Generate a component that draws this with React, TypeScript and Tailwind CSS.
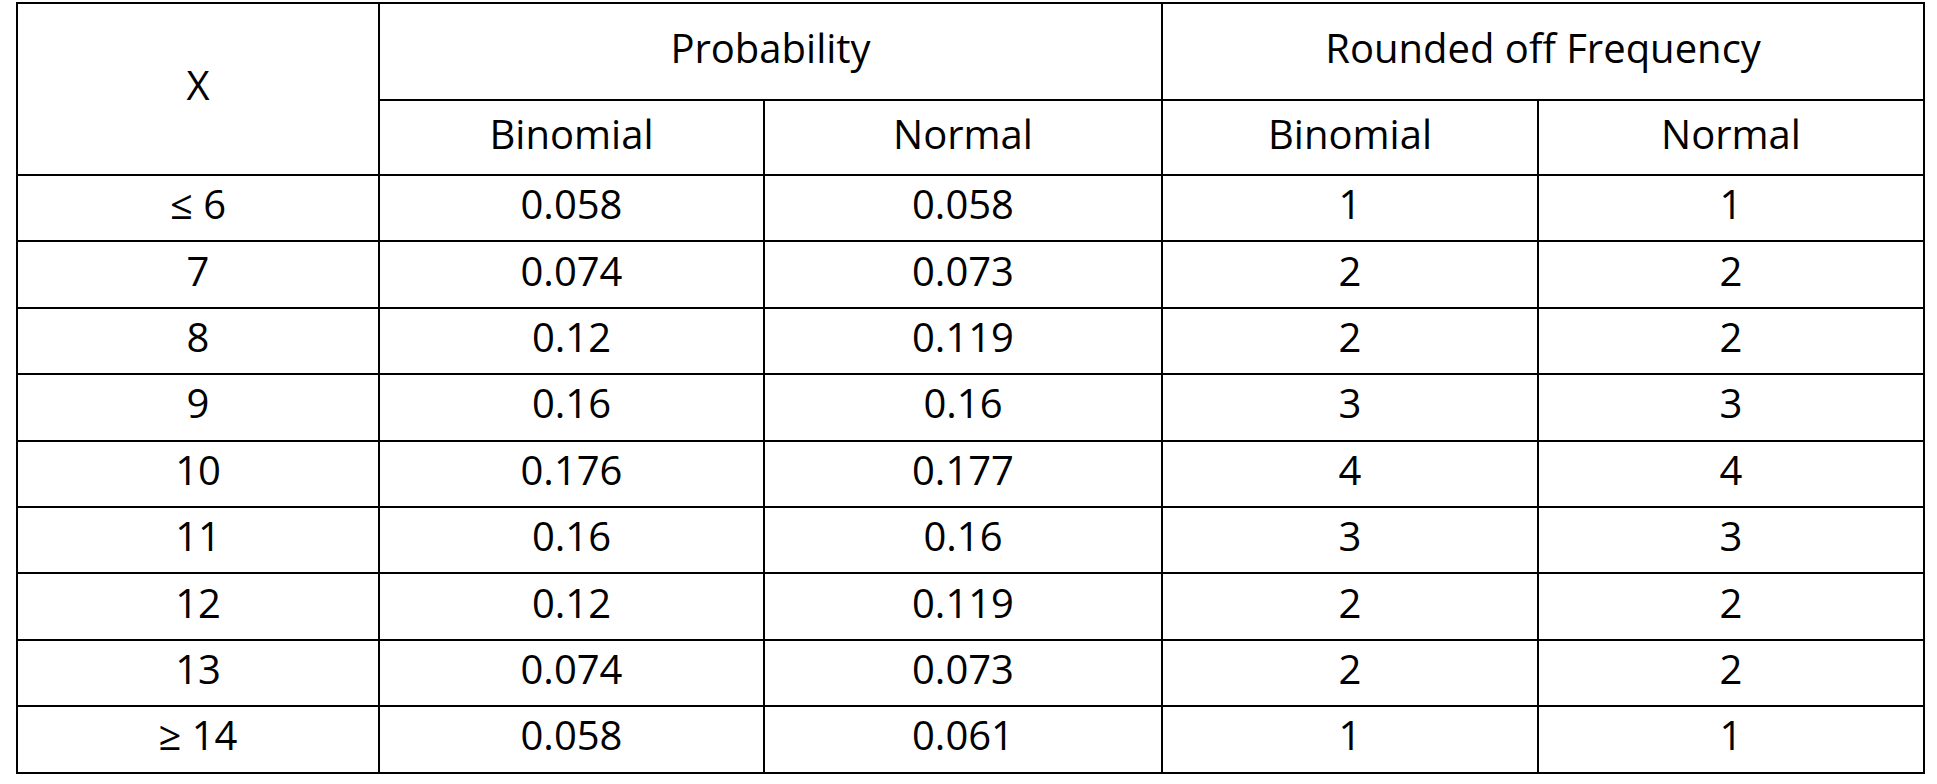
import React from "react";

const rows: [string, string, string, string, string][] = [
  ["≤ 6", "0.058", "0.058", "1", "1"],
  ["7", "0.074", "0.073", "2", "2"],
  ["8", "0.12", "0.119", "2", "2"],
  ["9", "0.16", "0.16", "3", "3"],
  ["10", "0.176", "0.177", "4", "4"],
  ["11", "0.16", "0.16", "3", "3"],
  ["12", "0.12", "0.119", "2", "2"],
  ["13", "0.074", "0.073", "2", "2"],
  ["≥ 14", "0.058", "0.061", "1", "1"],
];

const cell = "border-2 border-black text-center align-middle p-0 pb-[8px]";

export default function App() {
  return (
    <div
      className="w-[1937px] h-[784px] overflow-hidden bg-white pl-[16px] pt-[2px] text-black"
      style={{ fontFamily: '"Open Sans", "Liberation Sans", sans-serif' }}
    >
      <table className="table-fixed border-collapse w-[1907px] text-[40px] leading-none">
        <colgroup>
          <col className="w-[362px]" />
          <col className="w-[385px]" />
          <col className="w-[398px]" />
          <col className="w-[376px]" />
          <col className="w-[386px]" />
        </colgroup>
        <thead>
          <tr className="h-[97px]">
            <td rowSpan={2} className={cell}>
              X
            </td>
            <td colSpan={2} className={cell}>
              Probability
            </td>
            <td colSpan={2} className={cell}>
              Rounded off Frequency
            </td>
          </tr>
          <tr className="h-[75px]">
            <td className={cell}>Binomial</td>
            <td className={cell}>Normal</td>
            <td className={cell}>Binomial</td>
            <td className={cell}>Normal</td>
          </tr>
        </thead>
        <tbody>
          {rows.map((r, i) => (
            <tr key={i} className="h-[66.4px]">
              {r.map((c, j) => (
                <td key={j} className={cell}>
                  {c}
                </td>
              ))}
            </tr>
          ))}
        </tbody>
      </table>
    </div>
  );
}
